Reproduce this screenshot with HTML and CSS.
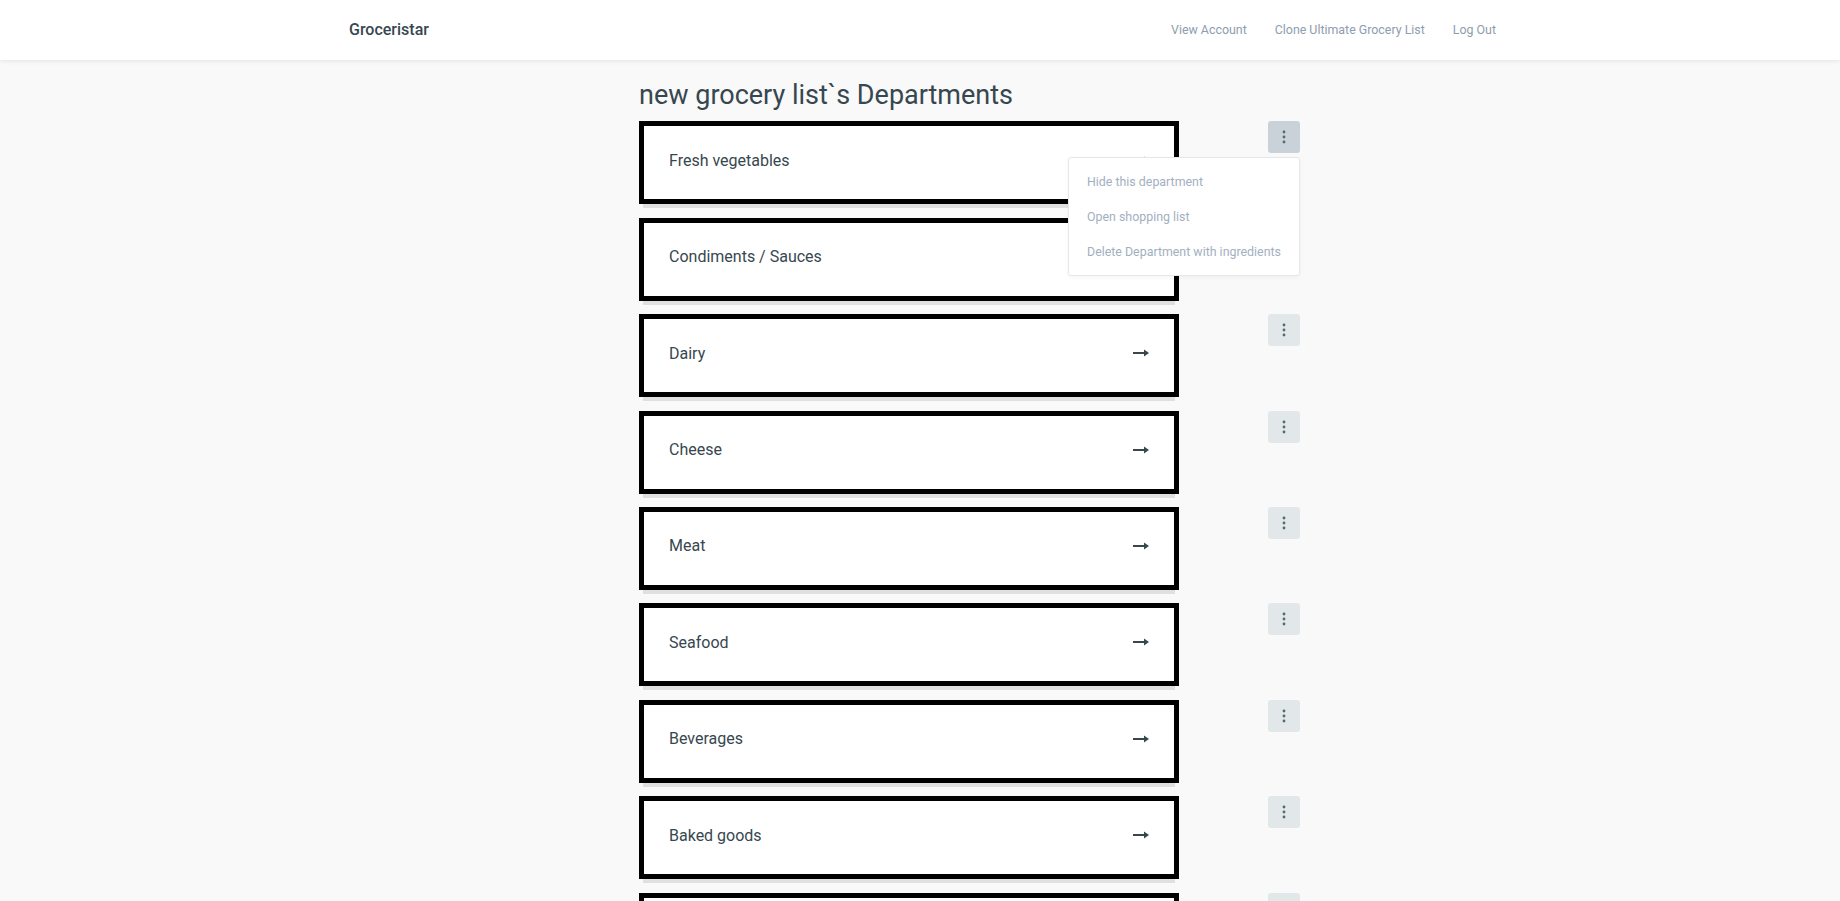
FILE: index.html
```html
<!DOCTYPE html>
<html lang="en">
<head>
<meta charset="utf-8">
<title>Groceristar</title>
<link rel="stylesheet" href="styles.css">
</head>
<body>
<nav class="navbar">
  <div class="nav-inner">
    <a class="brand" href="#">Groceristar</a>
    <ul class="nav-links">
      <li><a href="#">View Account</a></li>
      <li><a href="#">Clone Ultimate Grocery List</a></li>
      <li><a href="#">Log Out</a></li>
    </ul>
  </div>
</nav>

<main class="page">
  <section class="departments">
    <h1 class="title">new grocery list`s Departments</h1>
    <div class="dept-list">
      <div class="dept-row">
        <a class="dept-card" href="#"><span>Fresh vegetables</span>
          <svg class="arrow" width="16" height="8" viewBox="0 0 16 8"><rect x="0" y="3" width="12" height="2"/><path d="M11 0.5 L16 4 L11 7.5 Z"/></svg></a>
        <div class="kebab-wrap">
          <button class="kebab active"><svg width="4" height="14" viewBox="0 0 4 14"><circle cx="2" cy="2" r="1.4"/><circle cx="2" cy="7" r="1.4"/><circle cx="2" cy="12" r="1.4"/></svg></button>
          <ul class="menu">
            <li>Hide this department</li>
            <li>Open shopping list</li>
            <li>Delete Department with ingredients</li>
          </ul>
        </div>
      </div>
      <div class="dept-row">
        <a class="dept-card" href="#"><span>Condiments / Sauces</span>
          <svg class="arrow" width="16" height="8" viewBox="0 0 16 8"><rect x="0" y="3" width="12" height="2"/><path d="M11 0.5 L16 4 L11 7.5 Z"/></svg></a>
        <div class="kebab-wrap"><button class="kebab"><svg width="4" height="14" viewBox="0 0 4 14"><circle cx="2" cy="2" r="1.4"/><circle cx="2" cy="7" r="1.4"/><circle cx="2" cy="12" r="1.4"/></svg></button></div>
      </div>
      <div class="dept-row">
        <a class="dept-card" href="#"><span>Dairy</span>
          <svg class="arrow" width="16" height="8" viewBox="0 0 16 8"><rect x="0" y="3" width="12" height="2"/><path d="M11 0.5 L16 4 L11 7.5 Z"/></svg></a>
        <div class="kebab-wrap"><button class="kebab"><svg width="4" height="14" viewBox="0 0 4 14"><circle cx="2" cy="2" r="1.4"/><circle cx="2" cy="7" r="1.4"/><circle cx="2" cy="12" r="1.4"/></svg></button></div>
      </div>
      <div class="dept-row">
        <a class="dept-card" href="#"><span>Cheese</span>
          <svg class="arrow" width="16" height="8" viewBox="0 0 16 8"><rect x="0" y="3" width="12" height="2"/><path d="M11 0.5 L16 4 L11 7.5 Z"/></svg></a>
        <div class="kebab-wrap"><button class="kebab"><svg width="4" height="14" viewBox="0 0 4 14"><circle cx="2" cy="2" r="1.4"/><circle cx="2" cy="7" r="1.4"/><circle cx="2" cy="12" r="1.4"/></svg></button></div>
      </div>
      <div class="dept-row">
        <a class="dept-card" href="#"><span>Meat</span>
          <svg class="arrow" width="16" height="8" viewBox="0 0 16 8"><rect x="0" y="3" width="12" height="2"/><path d="M11 0.5 L16 4 L11 7.5 Z"/></svg></a>
        <div class="kebab-wrap"><button class="kebab"><svg width="4" height="14" viewBox="0 0 4 14"><circle cx="2" cy="2" r="1.4"/><circle cx="2" cy="7" r="1.4"/><circle cx="2" cy="12" r="1.4"/></svg></button></div>
      </div>
      <div class="dept-row">
        <a class="dept-card" href="#"><span>Seafood</span>
          <svg class="arrow" width="16" height="8" viewBox="0 0 16 8"><rect x="0" y="3" width="12" height="2"/><path d="M11 0.5 L16 4 L11 7.5 Z"/></svg></a>
        <div class="kebab-wrap"><button class="kebab"><svg width="4" height="14" viewBox="0 0 4 14"><circle cx="2" cy="2" r="1.4"/><circle cx="2" cy="7" r="1.4"/><circle cx="2" cy="12" r="1.4"/></svg></button></div>
      </div>
      <div class="dept-row">
        <a class="dept-card" href="#"><span>Beverages</span>
          <svg class="arrow" width="16" height="8" viewBox="0 0 16 8"><rect x="0" y="3" width="12" height="2"/><path d="M11 0.5 L16 4 L11 7.5 Z"/></svg></a>
        <div class="kebab-wrap"><button class="kebab"><svg width="4" height="14" viewBox="0 0 4 14"><circle cx="2" cy="2" r="1.4"/><circle cx="2" cy="7" r="1.4"/><circle cx="2" cy="12" r="1.4"/></svg></button></div>
      </div>
      <div class="dept-row">
        <a class="dept-card" href="#"><span>Baked goods</span>
          <svg class="arrow" width="16" height="8" viewBox="0 0 16 8"><rect x="0" y="3" width="12" height="2"/><path d="M11 0.5 L16 4 L11 7.5 Z"/></svg></a>
        <div class="kebab-wrap"><button class="kebab"><svg width="4" height="14" viewBox="0 0 4 14"><circle cx="2" cy="2" r="1.4"/><circle cx="2" cy="7" r="1.4"/><circle cx="2" cy="12" r="1.4"/></svg></button></div>
      </div>
      <div class="dept-row">
        <a class="dept-card" href="#"><span>Frozen foods</span>
          <svg class="arrow" width="16" height="8" viewBox="0 0 16 8"><rect x="0" y="3" width="12" height="2"/><path d="M11 0.5 L16 4 L11 7.5 Z"/></svg></a>
        <div class="kebab-wrap"><button class="kebab"><svg width="4" height="14" viewBox="0 0 4 14"><circle cx="2" cy="2" r="1.4"/><circle cx="2" cy="7" r="1.4"/><circle cx="2" cy="12" r="1.4"/></svg></button></div>
      </div>
    </div>
  </section>
</main>
</body>
</html>
```

FILE: styles.css
```css
* { box-sizing: border-box; }

html, body {
  margin: 0;
  padding: 0;
}

body {
  background: #f9f9f9;
  font-family: Roboto, "Liberation Sans", Arial, sans-serif;
  color: #37474f;
}

a { text-decoration: none; color: inherit; }

.navbar {
  height: 60px;
  background: #ffffff;
  box-shadow: 0 1px 5px rgba(0, 0, 0, 0.09);
  position: relative;
  z-index: 2;
}

.nav-inner {
  width: 1152px;
  margin: 0 auto;
  padding-left: 5px;
  height: 100%;
  display: flex;
  align-items: center;
  justify-content: space-between;
}

.brand {
  font-size: 16px;
  font-weight: 500;
  color: #37474f;
  padding-bottom: 1px;
}

.nav-links {
  list-style: none;
  margin: 0;
  padding: 0 0 3px;
  display: flex;
  gap: 28px;
}

.nav-links a {
  font-size: 12.4px;
  font-weight: 400;
  color: #8e9db0;
}

.page {
  width: 1170px;
  margin: 0 auto;
  padding-top: 19px;
}

.departments {
  margin-left: 304px;
  width: 661px;
}

.title {
  margin: 0 0 10px;
  font-size: 27px;
  font-weight: 400;
  line-height: 1.2;
  color: #37474f;
}

.dept-list {
  display: flex;
  flex-direction: column;
  gap: 13.4px;
}

.dept-row {
  display: flex;
  justify-content: space-between;
  align-items: flex-start;
}

.dept-card {
  width: 540px;
  height: 83px;
  background: #ffffff;
  border: 5px solid #000000;
  box-shadow: 0 8px 0 -4px #e0e0e0;
  padding: 0 25px;
  display: flex;
  align-items: center;
  justify-content: space-between;
  font-size: 16px;
  color: #37474f;
}

.dept-card span { margin-top: -5px; }

.arrow { fill: #37474f; margin-top: -5px; }

.kebab-wrap {
  position: relative;
}

.kebab {
  width: 32px;
  height: 32px;
  border: 0;
  border-radius: 3px;
  background: #e2e8ea;
  display: flex;
  align-items: center;
  justify-content: center;
  padding: 0;
}

.kebab svg { fill: #546872; }

.kebab.active { background: #c9d2d8; }

.menu {
  position: absolute;
  top: 36px;
  right: 0;
  width: 232px;
  margin: 0;
  padding: 6px 0;
  list-style: none;
  background: #ffffff;
  border: 1px solid #e3e8ec;
  border-radius: 3px;
  box-shadow: 0 2px 4px rgba(0, 0, 0, 0.04);
  z-index: 5;
}

.menu li {
  height: 35px;
  line-height: 35px;
  padding-left: 18px;
  font-size: 12.4px;
  color: #a3afbf;
  white-space: nowrap;
}
```
